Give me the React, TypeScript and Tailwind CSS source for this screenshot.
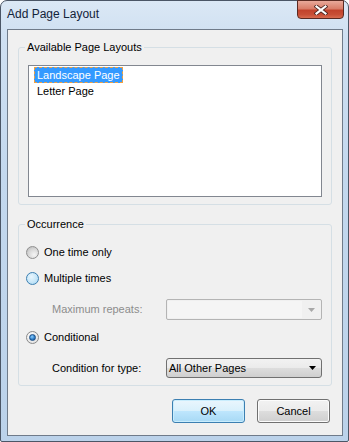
import React from "react";

const font = { fontFamily: '"Liberation Sans", Arial, sans-serif' };

function Radio({ kind }: { kind: "off" | "hover" | "on" }) {
  if (kind === "hover") {
    return (
      <span className="w-[13px] h-[13px] rounded-full border border-[#3c7fb1] bg-[radial-gradient(circle_at_40%_35%,#eaf6fd_0%,#c6e6f8_55%,#9fd2f0_100%)] shrink-0" />
    );
  }
  if (kind === "on") {
    return (
      <span className="w-[13px] h-[13px] rounded-full border border-[#8a8a8a] bg-[radial-gradient(circle_at_40%_35%,#ffffff_0%,#e6e6e6_70%,#d0d0d0_100%)] shrink-0 flex items-center justify-center">
        <span className="w-[7px] h-[7px] rounded-full border border-[#1b4e86] bg-[radial-gradient(circle_at_40%_35%,#8fd0ff_0%,#2f7fc8_55%,#174f8c_100%)]" />
      </span>
    );
  }
  return (
    <span className="w-[13px] h-[13px] rounded-full border border-[#8f8f8f] bg-[radial-gradient(circle_at_65%_70%,#f5f5f5_0%,#d6d6d6_55%,#b3b3b3_100%)] shrink-0" />
  );
}

function Group({ label, className, children }: { label: string; className: string; children: React.ReactNode }) {
  return (
    <div className={"relative border border-[#d5dfe5] rounded-[3px] " + className}>
      <span className="absolute left-[6px] top-[-7px] px-[2px] bg-[#f0f0f0] text-[11px] leading-[13px] text-black">
        {label}
      </span>
      {children}
    </div>
  );
}

export default function App() {
  return (
    <div className="w-[349px] h-[442px] bg-white" style={font}>
      <div className="relative w-full h-full border border-[#4b5666] rounded-t-[7px] rounded-b-[2px] bg-[linear-gradient(180deg,#dbe8f5_0%,#cfe0f2_8%,#c3d8ee_40%,#bbd2ea_100%)] flex flex-col">
        {/* title bar */}
        <div className="h-[28px] pl-[6px] pt-[6px] text-[12px] leading-[15px] text-[#13233a]">Add Page Layout</div>
        {/* close button */}
        <div className="absolute right-[4px] top-[-1px] w-[47px] h-[19px] rounded-b-[4px] border border-[#5a2a22] bg-[linear-gradient(180deg,#e9a99a_0%,#d97d69_45%,#c2432c_55%,#c84f36_80%,#d86b4f_100%)] flex items-center justify-center">
          <svg width="14" height="10" viewBox="0 0 14 10">
            <path d="M2.5 1.5 L11.5 8.5 M11.5 1.5 L2.5 8.5" stroke="#4a2520" strokeWidth="3.8" strokeLinecap="square" />
            <path d="M2.5 1.5 L11.5 8.5 M11.5 1.5 L2.5 8.5" stroke="#ffffff" strokeWidth="2.2" strokeLinecap="square" />
          </svg>
        </div>
        {/* client area */}
        <div className="flex-1 ml-[6px] mr-[5px] mb-[5px] border border-[#6f7b8a] bg-[#f0f0f0] px-[10px] flex flex-col text-[11px] leading-[13px] text-black">
          <Group label="Available Page Layouts" className="mt-[17px] h-[158px] pt-[17px] px-[9px]">
            <div className="h-[132px] border border-[#828790] bg-white pt-[1px] pl-[5px]">
              <div className="w-[89px] h-[16px] bg-[#3399ff] border border-dashed border-[#f0a040] text-white pl-[2px] flex items-center">
                Landscape Page
              </div>
              <div className="h-[16px] pl-[3px] flex items-center">Letter Page</div>
            </div>
          </Group>
          <Group label="Occurrence" className="mt-[19px] h-[162px] pt-[17px] pl-[7px]">
            <div className="h-[20px] flex items-center gap-[5px]">
              <Radio kind="off" />
              <span>One time only</span>
            </div>
            <div className="mt-[6px] h-[20px] flex items-center gap-[5px]">
              <Radio kind="hover" />
              <span>Multiple times</span>
            </div>
            <div className="mt-[11px] h-[21px] flex items-center pl-[26px]">
              <span className="w-[114px] text-[#8d8d8d]">Maximum repeats:</span>
              <div className="w-[156px] h-[21px] border border-[#b4b4b4] rounded-[2px] bg-[#f0f0f0] flex items-center p-[1px]">
                <div className="w-[134px] h-full bg-[#f5f5f5]" />
                <div className="flex-1 flex items-center justify-center">
                  <svg width="7" height="4" viewBox="0 0 7 4">
                    <path d="M0 0 H7 L3.5 4 Z" fill="#a8a8a8" />
                  </svg>
                </div>
              </div>
            </div>
            <div className="mt-[7px] h-[20px] flex items-center gap-[5px]">
              <Radio kind="on" />
              <span>Conditional</span>
            </div>
            <div className="mt-[11px] h-[20px] flex items-center pl-[26px]">
              <span className="w-[114px]">Condition for type:</span>
              <div className="w-[156px] h-[20px] border border-[#707070] rounded-[3px] bg-[linear-gradient(180deg,#f2f2f2_0%,#ebebeb_49%,#dddddd_51%,#cfcfcf_100%)] flex items-center pl-[2px] pr-[5px]">
                <span className="flex-1">All Other Pages</span>
                <svg width="7" height="4" viewBox="0 0 7 4">
                  <path d="M0 0 H7 L3.5 4 Z" fill="#000000" />
                </svg>
              </div>
            </div>
          </Group>
          <div className="mt-[13px] flex justify-end gap-[12px] pr-[2px]">
            <div className="w-[73px] h-[24px] border border-[#3c7fb1] rounded-[3px] bg-[linear-gradient(180deg,#eaf6fd_0%,#d9f0fc_49%,#bee6fd_51%,#a7d9f5_100%)] flex items-center justify-center shadow-[inset_0_0_0_1px_#c9edfd]">
              OK
            </div>
            <div className="w-[73px] h-[24px] border border-[#707070] rounded-[3px] bg-[linear-gradient(180deg,#f2f2f2_0%,#ebebeb_49%,#dddddd_51%,#cfcfcf_100%)] flex items-center justify-center shadow-[inset_0_0_0_1px_#fcfcfc]">
              Cancel
            </div>
          </div>
        </div>
      </div>
    </div>
  );
}
